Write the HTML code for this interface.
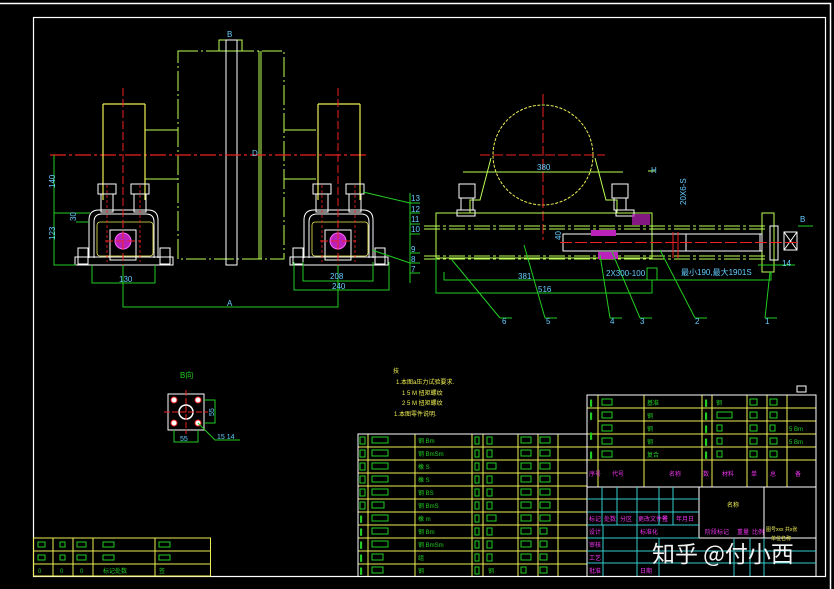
<!DOCTYPE html>
<html><head><meta charset="utf-8"><style>
html,body{margin:0;padding:0;background:#000;}
svg{display:block}
text{font-family:"Liberation Sans","Noto Sans CJK SC",sans-serif;}
</style></head><body>
<svg width="834" height="589" viewBox="0 0 834 589" xmlns="http://www.w3.org/2000/svg">
<rect width="834" height="589" fill="#000"/>
<!-- frames -->
<polyline points="0,3.5 830.5,3.5 830.5,589" fill="none" stroke="#fff" stroke-width="1.5"/>
<rect x="33.5" y="17.5" width="792" height="559" fill="none" stroke="#fff" stroke-width="1.2"/>

<defs>
<g id="ped">
  <!-- upper yellow housing -->
  <path d="M103,104 V200 M145,104 V200 M103,104 H145" stroke="#ee5" stroke-width="1.2" fill="none"/>
  <!-- bolts -->
  <g stroke="#fff" fill="none" stroke-width="1">
    <rect x="98" y="184" width="18" height="10"/><rect x="101" y="194" width="12" height="18"/>
    <rect x="131" y="184" width="18" height="10"/><rect x="134" y="194" width="12" height="18"/>
    <path d="M94,258 V222 Q94,214 102,214 H146 Q154,214 154,222 V258"/>
    <path d="M89,258 V220 Q89,210 99,210 H148 Q158,210 158,220 V258"/>
    <rect x="75" y="257" width="98" height="8"/>
    <rect x="78" y="248" width="10" height="16"/><rect x="160" y="248" width="10" height="16"/>
    <rect x="110" y="230" width="26" height="30"/>
  </g>
  <rect x="97" y="222" width="56" height="34" rx="3" fill="none" stroke="#ee5" stroke-width="0.8"/>
  <circle cx="123" cy="241" r="8" fill="#b2b" stroke="#f6f"/>
  <path d="M123,88 V270 M105,241 H141" stroke="#e22" stroke-width="1" stroke-dasharray="8 3"/>
  <path d="M107,185 V262 M140,185 V262" stroke="#e22" stroke-width="0.8" stroke-dasharray="3 2"/>
</g>
</defs>

<!-- front view -->
<g stroke="#bf5" fill="none" stroke-width="1">
  <rect x="178" y="51" width="106" height="208" stroke-dasharray="20 3 2 3"/>
  <path d="M259,51 V259 M261,51 V259"/>
  <path d="M145,130 H178 M145,179 H178 M284,130 H316 M284,179 H316"/>
  <rect x="219" y="40" width="23" height="11"/>
</g>
<rect x="226" y="40" width="11" height="225" fill="none" stroke="#fff" stroke-width="1"/>
<path d="M50,155 H368" stroke="#e22" stroke-width="1.2" stroke-dasharray="16 3 3 3"/>
<use href="#ped"/>
<use href="#ped" transform="translate(215,0)"/>
<g stroke="#2c2" fill="none" stroke-width="1">
  <path d="M54,155 V265 H76 M54,213 H90 M76,222 H89"/>
  <path d="M123,265 V307 H338 V265"/>
  <path d="M92,265 V283 H155 V265"/>
  <path d="M294,262 V290 H389 V262 M303,262 V281 H373 V262"/>
  <path d="M363,192 L410,203 M372,250 L410,263"/>
  <path d="M410,193 V283 M410,203 H420 M410,213 H420 M410,224 H420 M410,234 H420 M410,253 H420 M410,263 H420 M410,273 H420"/>
</g>
<g fill="#6cf" font-size="8">
  <text x="227" y="37">B</text><text x="252" y="156">D</text>
  <text x="119" y="282">130</text><text x="330" y="279">208</text><text x="332" y="289">240</text>
  <text x="227" y="306">A</text>
  <text x="47" y="188" transform="rotate(-90 51 184)">140</text>
  <text x="47" y="240" transform="rotate(-90 51 236)">123</text>
  <text x="70" y="221" transform="rotate(-90 73 218)">30</text>
  <text x="411" y="201">13</text><text x="411" y="212">12</text><text x="411" y="222">11</text>
  <text x="411" y="232">10</text><text x="411" y="252">9</text><text x="411" y="262">8</text><text x="411" y="272">7</text>
</g>

<!-- side view -->
<circle cx="543" cy="155" r="50" fill="none" stroke="#ee5" stroke-dasharray="3 1.5"/>
<path d="M543,94 V240 M480,155 H605" stroke="#e22" stroke-dasharray="10 3"/>
<g stroke="#bf5" fill="none">
  <path d="M491,158 L480,200 H470 V213 M595,158 L606,200 H617 V213"/>
  <path d="M463,172 H623 M648,171 H655"/>
  <path d="M424,226 H765 M424,229 H765 M424,256 H765 M424,259 H765" stroke-dasharray="16 3 3 3"/>
  <rect x="436" y="213" width="216" height="45"/>
  <rect x="762" y="213" width="12" height="59"/>
</g>
<g stroke="#fff" fill="none">
  <rect x="459" y="184" width="16" height="14"/><rect x="461" y="198" width="12" height="12"/><rect x="457" y="210" width="18" height="6"/>
  <rect x="612" y="184" width="16" height="14"/><rect x="614" y="198" width="12" height="12"/><rect x="616" y="210" width="18" height="6"/>
  <rect x="563" y="234" width="197" height="17"/>
  <rect x="686" y="234" width="76" height="17"/>
  <rect x="770" y="226" width="8" height="34"/><rect x="784" y="232" width="13" height="18"/>
  <path d="M784,232 L797,250 M797,232 L784,250"/>
</g>
<rect x="591" y="230" width="25" height="6" fill="#b2b"/>
<rect x="598" y="252" width="20" height="7" fill="#b2b"/>
<rect x="632" y="214" width="18" height="11" fill="#b2b" opacity="0.7"/>
<path d="M560,242.5 H800" stroke="#e22" stroke-dasharray="12 3"/>
<path d="M673,232 V258 M678,232 V258" stroke="#e22"/>
<g stroke="#2c2" fill="none">
  <path d="M444,272 V280 H771 M436,258 V293 H652 V280 M700,280 H771 V272"/>
  <path d="M452,260 L500,318 M524,245 L545,318 M600,255 L610,318 M612,252 L640,318 M660,250 L695,318 M770,272 L765,318"/>
  <path d="M500,318 H512 M545,318 H557 M610,318 H622 M640,318 H652 M695,318 H707 M765,318 H777"/>
  <path d="M798,226 H813 M758,265 H795"/>
  <rect x="647" y="268" width="10" height="12"/>
</g>
<g fill="#6cf" font-size="8">
  <text x="537" y="170">380</text><text x="518" y="279">381</text><text x="538" y="292">516</text>
  <text x="606" y="276">2X300-100</text><text x="681" y="275">最小190,最大1901S</text>
  <text x="800" y="222">B</text><text x="782" y="266">14</text><text x="651" y="173">H</text>
  <text x="502" y="324">6</text><text x="546" y="324">5</text><text x="610" y="324">4</text>
  <text x="640" y="324">3</text><text x="695" y="324">2</text><text x="765" y="324">1</text>
  <text x="557" y="244" transform="rotate(-90 557 240)">40</text>
  <text x="681" y="210" transform="rotate(-90 681 205)">20X6-S</text>
</g>

<!-- B view -->
<text x="180" y="378" fill="#2c2" font-size="8">B向</text>
<rect x="168" y="394" width="36" height="36" fill="none" stroke="#fff"/>
<circle cx="186" cy="412" r="7" fill="none" stroke="#fff" stroke-width="1.5"/>
<g fill="#fff" stroke="#e22"><circle cx="174" cy="400" r="3"/><circle cx="198" cy="400" r="3"/><circle cx="174" cy="423" r="3"/><circle cx="198" cy="423" r="3"/></g>
<path d="M186,390 V434 M164,412 H208" stroke="#e22" stroke-dasharray="6 2"/>
<g stroke="#2c2" fill="none"><path d="M174,430 V442 H198 V430 M204,400 H215 V423 H204 M198,423 L215,440 H240"/></g>
<g fill="#6cf" font-size="7"><text x="180" y="441">55</text><text x="217" y="439">15  14</text><text x="206" y="416" transform="rotate(-90 210 412)">55</text></g>

<!-- notes -->
<g fill="#ee5" font-size="6">
  <text x="393" y="373">技</text><text x="396" y="384">1.本图a压力试验要求.</text>
  <text x="402" y="395">1 5 M  扭矩螺纹</text><text x="402" y="405">2 5 M  扭矩螺纹</text>
  <text x="394" y="416">1.本图零件说明.</text>
</g>
<rect x="797" y="386" width="9" height="6" fill="none" stroke="#fff"/>

<!-- left parts table -->
<g stroke="#ee5" fill="none" stroke-width="1">
  <path d="M358,434 H587 M358,447 H587 M358,460 H587 M358,473 H587 M358,486 H587 M358,499 H587 M358,512 H587 M358,525 H587 M358,538 H587 M358,551 H587 M358,564 H587"/>
  <path d="M368,434 V576 M415,434 V576 M472,434 V576 M483,434 V576 M518,434 V576 M538,434 V576 M558,434 V576"/>
</g>
<path d="M358,576 V434 H587" stroke="#fff" fill="none"/>
<g fill="none" stroke="#2c2">
  <rect x="360" y="437" width="5" height="7"/><rect x="372" y="437" width="16" height="6"/><rect x="360" y="450" width="5" height="7"/><rect x="372" y="450" width="16" height="6"/>
  <rect x="360" y="463" width="5" height="7"/><rect x="372" y="463" width="16" height="6"/><rect x="360" y="476" width="5" height="7"/><rect x="372" y="476" width="16" height="6"/>
  <rect x="360" y="489" width="5" height="7"/><rect x="372" y="489" width="16" height="6"/><rect x="360" y="502" width="5" height="7"/><rect x="372" y="502" width="12" height="6"/>
  <rect x="372" y="515" width="16" height="6"/><rect x="372" y="528" width="16" height="6"/><rect x="372" y="541" width="16" height="6"/><rect x="372" y="554" width="11" height="6"/><rect x="372" y="567" width="11" height="6"/>
  <rect x="487" y="437" width="5" height="7"/><rect x="487" y="450" width="5" height="7"/><rect x="487" y="463" width="9" height="6"/><rect x="487" y="476" width="5" height="7"/><rect x="487" y="489" width="5" height="7"/><rect x="487" y="502" width="5" height="7"/><rect x="487" y="515" width="9" height="6"/><rect x="487" y="528" width="5" height="7"/><rect x="487" y="541" width="5" height="7"/><rect x="487" y="554" width="5" height="7"/>
  <rect x="521" y="437" width="10" height="6"/><rect x="521" y="450" width="10" height="6"/><rect x="521" y="463" width="10" height="6"/><rect x="521" y="476" width="10" height="6"/><rect x="521" y="489" width="10" height="6"/><rect x="521" y="502" width="10" height="6"/><rect x="521" y="515" width="10" height="6"/><rect x="521" y="528" width="10" height="6"/><rect x="521" y="541" width="10" height="6"/><rect x="521" y="554" width="10" height="6"/><rect x="521" y="567" width="5" height="6"/>
  <rect x="540" y="437" width="10" height="6"/><rect x="540" y="450" width="10" height="6"/><rect x="540" y="463" width="10" height="6"/><rect x="540" y="476" width="10" height="6"/><rect x="540" y="489" width="10" height="6"/><rect x="540" y="502" width="10" height="6"/><rect x="540" y="515" width="10" height="6"/><rect x="540" y="528" width="7" height="6"/><rect x="540" y="541" width="7" height="6"/><rect x="540" y="554" width="7" height="6"/><rect x="540" y="567" width="7" height="6"/>
  <rect x="475" y="437" width="4" height="7"/><rect x="475" y="450" width="4" height="7"/><rect x="475" y="463" width="4" height="7"/><rect x="475" y="476" width="4" height="7"/><rect x="475" y="489" width="4" height="7"/><rect x="475" y="502" width="4" height="7"/><rect x="475" y="515" width="4" height="7"/><rect x="475" y="528" width="4" height="7"/><rect x="475" y="541" width="4" height="7"/><rect x="475" y="554" width="4" height="7"/><rect x="475" y="567" width="4" height="7"/>
</g>
<g fill="#2c2" font-size="6">
  <text x="418" y="443">钢 Bm</text><text x="418" y="456">钢 BmSm</text><text x="418" y="469">橡 S</text><text x="418" y="482">橡 S</text><text x="418" y="495">钢 BS</text><text x="418" y="508">钢 BmS</text><text x="418" y="521">橡 m</text><text x="418" y="534">钢 Bm</text><text x="418" y="547">钢 BmSm</text><text x="418" y="560">组</text><text x="418" y="573">钢</text>
  <text x="360" y="521">▌</text><text x="360" y="534">▌</text><text x="360" y="547">▌</text><text x="360" y="560">▌</text><text x="360" y="573">▌</text><text x="488" y="573">钢</text>
</g>

<!-- right title block -->
<g stroke="#ee5" fill="none">
  <path d="M587,408 H816 M598,421 H816 M587,434 H816 M587,447 H816 M587,460 H816"/>
  <path d="M598,395 V460 M644,395 V487 M702,395 V487 M712,395 V487 M747,395 V487 M767,395 V487 M787,395 V487 M598,460 V487"/>
</g>
<path d="M587,576 V395 H816 V576 M587,487 H816 M699,487 V538 M764,487 V538 M699,538 H816" stroke="#fff" fill="none"/>
<g stroke="#3cc" fill="none">
  <path d="M587,499 H699 M587,512 H699 M587,525 H699 M587,538 H699 M587,551 H816 M587,563 H816"/>
  <path d="M602,487 V525 M617,487 V525 M637,487 V576 M659,487 V525 M673,487 V525 M603,525 V576 M659,538 V576 M734,538 V576 M750,538 V576 M764,538 V576"/>
</g>
<g fill="none" stroke="#2c2">
  <rect x="602" y="399" width="10" height="6"/><rect x="602" y="412" width="10" height="6"/><rect x="602" y="425" width="10" height="6"/><rect x="602" y="438" width="10" height="6"/><rect x="602" y="451" width="10" height="6"/>
  <rect x="717" y="412" width="15" height="6"/><rect x="717" y="425" width="5" height="6"/><rect x="717" y="438" width="5" height="6"/><rect x="717" y="451" width="5" height="6"/>
  <rect x="750" y="399" width="7" height="6"/><rect x="750" y="412" width="7" height="6"/><rect x="750" y="425" width="7" height="6"/><rect x="750" y="438" width="7" height="6"/><rect x="750" y="451" width="7" height="6"/>
  <rect x="770" y="399" width="7" height="6"/><rect x="770" y="412" width="7" height="6"/><rect x="770" y="425" width="5" height="6"/><rect x="770" y="438" width="7" height="6"/><rect x="770" y="451" width="7" height="6"/>
</g>
<g fill="#2c2" font-size="6">
  <text x="590" y="405">▌</text><text x="590" y="418">▌</text><text x="590" y="438">▌</text><text x="590" y="457">▌</text>
  <text x="705" y="405">▌</text><text x="705" y="418">▌</text><text x="705" y="431">▌</text><text x="705" y="444">▌</text><text x="705" y="457">▌</text>
  <text x="647" y="405">基准</text><text x="647" y="418">钢</text><text x="647" y="431">钢</text><text x="647" y="444">钢</text><text x="647" y="457">复合</text>
  <text x="716" y="405">钢</text><text x="789" y="431">5 Bm</text><text x="789" y="444">5 Bm</text>
</g>
<g fill="#e3e" font-size="6">
  <text x="589" y="476">序号</text><text x="612" y="476">代号</text><text x="669" y="476">名称</text><text x="703" y="476">数</text><text x="722" y="476">材料</text><text x="751" y="476">单</text><text x="770" y="476">总</text><text x="795" y="476">备</text>
  <text x="589" y="521">标记</text><text x="604" y="521">处数</text><text x="620" y="521">分区</text><text x="638" y="521">更改文件号</text><text x="662" y="521">签</text><text x="676" y="521">年月日</text>
  <text x="589" y="534">设计</text><text x="589" y="547">审核</text><text x="589" y="560">工艺</text><text x="589" y="573">批准</text>
  <text x="640" y="534">标准化</text><text x="640" y="573">日期</text><text x="705" y="534">阶段标记</text><text x="737" y="534">重量</text><text x="752" y="534">比例</text>
</g>
<text x="727" y="507" fill="#ee5" font-size="6">名称</text>
<text x="766" y="531" fill="#ee5" font-size="5">图号xxx 共x张</text>
<text x="771" y="540" fill="#ee5" font-size="5">单位名称</text>

<!-- bottom-left table -->
<g stroke="#ee5" fill="none">
  <rect x="33.5" y="538" width="177" height="38"/>
  <path d="M33,551 H210 M33,564 H210 M53,538 V576 M73,538 V576 M93,538 V576 M155,538 V576"/>
</g>
<g fill="none" stroke="#2c2">
  <rect x="38" y="542" width="7" height="5"/><rect x="60" y="542" width="5" height="5"/><rect x="77" y="542" width="9" height="5"/><rect x="103" y="542" width="11" height="5"/><rect x="159" y="542" width="11" height="5"/>
  <rect x="38" y="555" width="7" height="5"/><rect x="60" y="555" width="5" height="5"/><rect x="77" y="555" width="9" height="5"/><rect x="103" y="555" width="11" height="5"/><rect x="159" y="555" width="11" height="5"/>
</g>
<g fill="#2c2" font-size="6"><text x="38" y="573">0</text><text x="60" y="573">0</text><text x="80" y="573">0</text><text x="103" y="573">标记处数</text><text x="159" y="573">签</text></g>

<!-- watermark -->
<text x="652" y="562" fill="#fff" font-size="23" style='font-family:"Noto Sans CJK SC","WenQuanYi Zen Hei",sans-serif' opacity="0.95">知乎 @付小西</text>
</svg>
</body></html>
